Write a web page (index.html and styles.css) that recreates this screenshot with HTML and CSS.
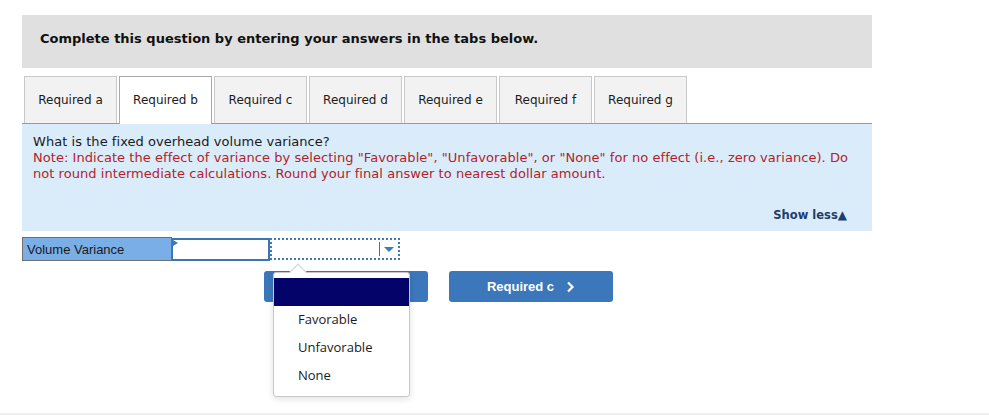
FILE: index.html
```html
<!DOCTYPE html>
<html lang="en">
<head>
<meta charset="utf-8">
<title>Question</title>
<link rel="stylesheet" href="styles.css">
</head>
<body>
<div class="page">
  <div class="header">Complete this question by entering your answers in the tabs below.</div>
  <div class="tabs">
    <div class="tab">Required a</div>
    <div class="tab active">Required b</div>
    <div class="tab">Required c</div>
    <div class="tab">Required d</div>
    <div class="tab">Required e</div>
    <div class="tab">Required f</div>
    <div class="tab">Required g</div>
  </div>
  <div class="panel">
    <div class="question">What is the fixed overhead volume variance?</div>
    <div class="note">Note: Indicate the effect of variance by selecting "Favorable", "Unfavorable", or "None" for no effect (i.e., zero variance). Do not round intermediate calculations. Round your final answer to nearest dollar amount.</div>
    <div class="show-less">Show less<span class="tri">&#9650;</span></div>
  </div>
  <div class="answer-row">
    <div class="label">Volume Variance</div>
    <div class="input"><span class="corner"></span></div>
    <div class="select">
      <span class="sep"></span>
      <span class="arrow"></span>
      <div class="dropdown">
        <div class="opt selected"></div>
        <div class="opt">Favorable</div>
        <div class="opt">Unfavorable</div>
        <div class="opt">None</div>
      </div>
    </div>
  </div>
  <div class="buttons">
    <div class="btn"></div>
    <div class="btn">Required c <span class="chev"><svg width="9" height="12" viewBox="0 0 9 12"><path d="M2 1.5 L6.5 6 L2 10.5" fill="none" stroke="#fff" stroke-width="2.2"/></svg></span></div>
  </div>
</div>
<div class="footer-line"></div>
</body>
</html>
```
FILE: styles.css
```css
* { box-sizing: border-box; }
body {
  margin: 0;
  background: #fff;
  font-family: "DejaVu Sans", Verdana, sans-serif;
  color: #222;
}
.page {
  width: 850px;
  margin-left: 22px;
  padding-top: 15px;
}
.header {
  height: 53px;
  background: #e0e0e0;
  padding: 16px 0 0 18px;
  font-weight: bold;
  font-size: 13px;
  line-height: 16px;
  color: #111;
}
.tabs {
  margin-top: 8px;
  display: flex;
  gap: 2px;
  padding-left: 2px;
  border-bottom: 1px solid #9a9a9a;
  height: 48px;
}
.tab {
  width: 93px;
  height: 47px;
  background: #f2f2f2;
  border: 1px solid #c9c9c9;
  border-bottom: none;
  display: flex;
  align-items: center;
  justify-content: center;
  font-size: 12px;
  color: #1a1a1a;
}
.tab.active {
  background: #fff;
  border-color: #a8a8a8;
  height: 48px;
  margin-bottom: -1px;
  padding-bottom: 1px;
}
.panel {
  position: relative;
  height: 107px;
  background: #daecf9;
  padding: 10px 15px 0 11px;
  font-size: 13px;
  line-height: 16px;
  letter-spacing: 0.05px;
}
.question { color: #1a1a1a; }
.note { color: #b3222b; }
.show-less {
  position: absolute;
  right: 25px;
  bottom: 8px;
  font-size: 11.5px;
  font-weight: bold;
  color: #1c3f70;
  letter-spacing: 0;
}
.show-less .tri { font-size: 12px; }
.answer-row {
  margin-top: 6px;
  display: flex;
  height: 24px;
}
.label {
  width: 150px;
  height: 24px;
  background: #7aaee6;
  border: 1px solid #6e6e6e;
  font-family: "Liberation Sans", Arial, sans-serif;
  font-size: 13px;
  color: #1a1a1a;
  padding-left: 4px;
  display: flex;
  align-items: center;
}
.input {
  position: relative;
  width: 98px;
  height: 23px;
  margin-top: 1px;
  background: #fff;
  border: 2px solid #3f74b3;
  border-left-width: 1px;
}
.corner {
  position: absolute;
  left: 0;
  top: 0;
  width: 0;
  height: 0;
  border-top: 3px solid transparent;
  border-bottom: 3px solid transparent;
  border-left: 5px solid #3f74b3;
}
.select {
  position: relative;
  width: 130px;
  height: 22px;
  margin-top: 1px;
  border: 2px dotted #3a79c4;
}
.sep {
  position: absolute;
  right: 18px;
  top: 2px;
  width: 1px;
  height: 14px;
  background: #3a6fb0;
}
.arrow {
  position: absolute;
  right: 4px;
  top: 7px;
  width: 0;
  height: 0;
  border-left: 5px solid transparent;
  border-right: 5px solid transparent;
  border-top: 5px solid #3a79c4;
}
.dropdown {
  position: absolute;
  left: 1px;
  top: 32px;
  width: 137px;
  padding: 5px 0 6px;
  background: #fff;
  border: 1px solid #c8c8c8;
  border-radius: 3px;
  box-shadow: 0 2px 6px rgba(0,0,0,0.12);
  font-family: "Open Sans", "Noto Sans", sans-serif;
  font-size: 13px;
  color: #1a1a1a;
  z-index: 5;
}
.dropdown::before {
  content: "";
  position: absolute;
  left: 18px;
  top: -7px;
  width: 11px;
  height: 11px;
  background: #fff;
  border-left: 1px solid #d0d0d0;
  border-top: 1px solid #d0d0d0;
  transform: rotate(45deg);
}
.opt {
  position: relative;
  height: 28px;
  line-height: 27px;
  padding-left: 24px;
}
.opt.selected { background: #03036a; }
.buttons {
  margin-top: 10px;
  margin-left: 242px;
  display: flex;
  gap: 21px;
}
.btn {
  width: 164px;
  height: 31px;
  background: #3b77ba;
  border-radius: 3px;
  color: #fff;
  font-family: "Liberation Sans", Arial, sans-serif;
  font-weight: bold;
  font-size: 13px;
  display: flex;
  align-items: center;
  justify-content: center;
  gap: 12px;
}
.chev { display: flex; }
.footer-line {
  margin-top: 111px;
  height: 2px;
  background: #f0f0f0;
}
```
